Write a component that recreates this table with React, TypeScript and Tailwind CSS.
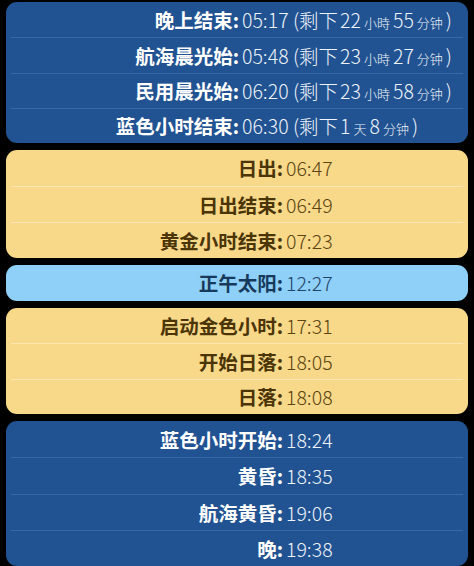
import React from "react";

type Row = { label: string; value: React.ReactNode };

type Section = {
  rows: Row[];
  panel: string;
  divider: string;
  labelColor: string;
  valueColor: string;
  labelWidth: string;
  rowHeight: string;
};

const Small = ({ children }: { children: React.ReactNode }) => (
  <span className="text-[13px] mx-[3px]">{children}</span>
);

const remain = (time: string, h: string, hUnit: string, m: string) => (
  <>
    {time} (剩下<span className="ml-[2px]">{h}</span>
    <Small>{hUnit}</Small>
    {m}
    <Small>分钟</Small>)
  </>
);

const blue = {
  panel: "bg-[#215291]",
  divider: "border-[#3868a6]",
  labelColor: "text-white",
  valueColor: "text-[#eef3fa]",
};

const yellow = {
  panel: "bg-[#f8d889]",
  divider: "border-[#fbe6b4]",
  labelColor: "text-[#4b3507]",
  valueColor: "text-[#5a4412]",
};

const sections: Section[] = [
  {
    ...blue,
    labelWidth: "w-[228px]",
    rowHeight: "h-[35.25px]",
    rows: [
      { label: "晚上结束", value: remain("05:17", "22", "小時", "55") },
      { label: "航海晨光始", value: remain("05:48", "23", "小時", "27") },
      { label: "民用晨光始", value: remain("06:20", "23", "小時", "58") },
      { label: "蓝色小时结束", value: remain("06:30", "1", "天", "8") },
    ],
  },
  {
    ...yellow,
    labelWidth: "w-[272px]",
    rowHeight: "h-[36px]",
    rows: [
      { label: "日出", value: "06:47" },
      { label: "日出结束", value: "06:49" },
      { label: "黄金小时结束", value: "07:23" },
    ],
  },
  {
    panel: "bg-[#8fd0f8]",
    divider: "border-[#a8dcfa]",
    labelColor: "text-[#173a5c]",
    valueColor: "text-[#1f4468]",
    labelWidth: "w-[272px]",
    rowHeight: "h-[36px]",
    rows: [{ label: "正午太阳", value: "12:27" }],
  },
  {
    ...yellow,
    labelWidth: "w-[272px]",
    rowHeight: "h-[35.4px]",
    rows: [
      { label: "启动金色小时", value: "17:31" },
      { label: "开始日落", value: "18:05" },
      { label: "日落", value: "18:08" },
    ],
  },
  {
    ...blue,
    labelWidth: "w-[272px]",
    rowHeight: "h-[36.25px]",
    rows: [
      { label: "蓝色小时开始", value: "18:24" },
      { label: "黄昏", value: "18:35" },
      { label: "航海黄昏", value: "19:06" },
      { label: "晚", value: "19:38" },
    ],
  },
];

export default function App() {
  return (
    <div
      className="w-[474px] h-[566px] overflow-hidden bg-black px-[6px] pt-[2px] flex flex-col gap-[7px]"
      style={{ fontFamily: '"Noto Sans CJK SC", "Noto Sans", sans-serif' }}
    >
      {sections.map((s, si) => (
        <div key={si} className={`${s.panel} rounded-[11px] px-[5px] shrink-0`}>
          {s.rows.map((r, ri) => (
            <div
              key={r.label}
              className={`flex items-center ${s.rowHeight} text-[19.5px] leading-none ${
                ri > 0 ? `border-t ${s.divider}` : ""
              }`}
            >
              <div className={`${s.labelWidth} shrink-0 text-right font-bold ${s.labelColor}`}>
                {r.label}:
              </div>
              <div className={`pl-[3px] whitespace-nowrap font-light ${s.valueColor}`}>{r.value}</div>
            </div>
          ))}
        </div>
      ))}
    </div>
  );
}
